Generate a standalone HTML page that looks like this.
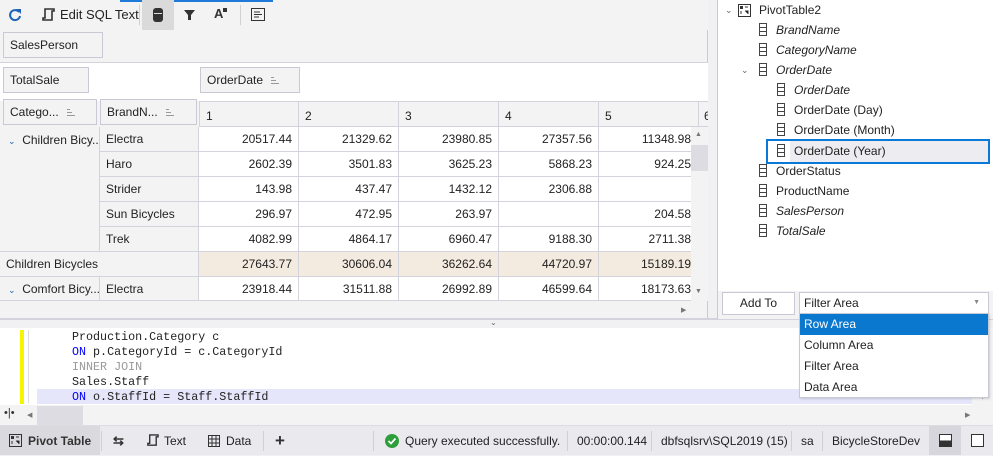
<!DOCTYPE html>
<html><head><style>
*{box-sizing:border-box;margin:0;padding:0}
body{width:993px;height:455px;overflow:hidden;background:#f1f1f3;font-family:"Liberation Sans",sans-serif;font-size:12px;color:#222;position:relative}
.a{position:absolute}
.box{position:absolute;border:1px solid #c9c9d6;background:#f3f3f3;padding:0 0 0 6px;line-height:22px;color:#222;white-space:nowrap}
.sort{display:inline-block;width:8px;height:7px;margin-left:8px;vertical-align:middle;background:linear-gradient(#999,#999) 0 0/3px 1px no-repeat,linear-gradient(#999,#999) 0 3px/5px 1px no-repeat,linear-gradient(#999,#999) 0 6px/8px 1px no-repeat}
.c{position:absolute;border-right:1px solid #d3d3de;border-bottom:1px solid #d3d3de;height:25px;line-height:24px;padding:0 6px;text-align:right;background:#fff;white-space:nowrap;overflow:hidden}
.rh{background:#f3f3f3;text-align:left}
.tot{background:#f4ebe0}
.tr{position:absolute;left:0;height:20px;line-height:20px;white-space:nowrap}
.fi{display:inline-block;width:8px;height:13px;border:1px solid #444;vertical-align:-2px;margin-right:9px;background:linear-gradient(#444,#444) 0 3px/100% 1px no-repeat,linear-gradient(#444,#444) 0 7px/100% 1px no-repeat}
.mono{font-family:"Liberation Mono",monospace;font-size:11.7px}
.kw{color:#0000ff}
.sb span{position:absolute;top:0;line-height:30px;white-space:nowrap}
.sep{position:absolute;top:5px;width:1px;height:20px;background:#cfcfd8}
</style></head><body>
<div class="a" style="left:0;top:0;width:708px;height:30px;background:#f3f3f3"></div>
<div class="a" style="left:120px;top:0;width:153px;height:2px;background:#1e7ad8"></div>
<svg class="a" style="left:8px;top:8px" width="14" height="14" viewBox="0 0 14 14"><path d="M11 4A5 5 0 1 0 12 8" fill="none" stroke="#1d63b8" stroke-width="2"/><path d="M8 1l5 0 0 5z" fill="#1d63b8"/></svg>
<svg class="a" style="left:41px;top:8px" width="14" height="14" viewBox="0 0 14 14"><path d="M4 1h9v2h-2v9H2v-2h2z" fill="none" stroke="#333" stroke-width="1.6"/></svg>
<div class="a" style="left:60px;top:7px;font-size:13px">Edit SQL Text</div>
<div class="a" style="left:139px;top:5px;width:1px;height:20px;background:#d0d0d0"></div>
<div class="a" style="left:142px;top:0;width:32px;height:30px;background:#dadada"></div>
<svg class="a" style="left:153px;top:8px" width="10" height="14" viewBox="0 0 10 14"><rect x="0" y="0" width="10" height="14" rx="3" fill="#333"/><rect x="1" y="5" width="8" height="1" fill="#ddd"/></svg>
<svg class="a" style="left:184px;top:10px" width="11" height="10"><path d="M0 0h11L7 5v5H4V5z" fill="#333"/></svg>
<div class="a" style="left:214px;top:6px;font-size:13px;font-weight:bold;color:#333">A</div><div class="a" style="left:223px;top:8px;width:4px;height:4px;background:#333"></div>
<div class="a" style="left:240px;top:5px;width:1px;height:20px;background:#d0d0d0"></div>
<svg class="a" style="left:251px;top:8px" width="14" height="13"><rect x="0.5" y="0.5" width="13" height="12" fill="none" stroke="#333"/><path d="M3 4h6M3 6.5h8M3 9h5" stroke="#333"/></svg>
<div class="a" style="left:0;top:30px;width:708px;height:290px;background:#f3f3f3;border-right:1px solid #c9c9d6"></div>
<div class="a" style="left:0;top:62px;width:708px;height:1px;background:#d3d3de"></div>
<div class="box" style="left:3px;top:32px;width:100px;height:26px;line-height:24px">SalesPerson</div>
<div class="a" style="left:0;top:63px;width:708px;height:38px;background:#fff"></div>
<div class="box" style="left:3px;top:67px;width:86px;height:26px;line-height:24px">TotalSale</div>
<div class="box" style="left:200px;top:67px;width:100px;height:26px;line-height:24px">OrderDate<span class="sort"></span></div>
<div class="box" style="left:3px;top:99px;width:94px;height:26px;line-height:24px">Catego...<span class="sort"></span></div>
<div class="box" style="left:100px;top:99px;width:97px;height:26px;line-height:24px">BrandN...<span class="sort"></span></div>
<div class="c rh" style="left:199px;top:101px;width:100px;height:26px;line-height:28px;border-top:1px solid #d3d3de;border-left:1px solid #d3d3de">1</div>
<div class="c rh" style="left:299px;top:101px;width:100px;height:26px;line-height:28px;border-top:1px solid #d3d3de">2</div>
<div class="c rh" style="left:399px;top:101px;width:100px;height:26px;line-height:28px;border-top:1px solid #d3d3de">3</div>
<div class="c rh" style="left:499px;top:101px;width:100px;height:26px;line-height:28px;border-top:1px solid #d3d3de">4</div>
<div class="c rh" style="left:599px;top:101px;width:100px;height:26px;line-height:28px;border-top:1px solid #d3d3de">5</div>
<div class="c rh" style="left:699px;top:101px;width:9px;height:26px;line-height:28px;border-top:1px solid #d3d3de;padding:0 0 0 5px;border-right:0">6</div>
<div class="c rh" style="left:0;top:127px;width:100px;height:125px;line-height:26px;padding-left:8px"><span style="color:#1d63b8;font-size:9px">&#8964;</span>&nbsp; Children Bicy...</div>
<div class="c rh" style="left:100px;top:127px;width:99px">Electra</div>
<div class="c rh" style="left:100px;top:152px;width:99px">Haro</div>
<div class="c rh" style="left:100px;top:177px;width:99px">Strider</div>
<div class="c rh" style="left:100px;top:202px;width:99px">Sun Bicycles</div>
<div class="c rh" style="left:100px;top:227px;width:99px">Trek</div>
<div class="c rh" style="left:0;top:252px;width:199px">Children Bicycles</div>
<div class="c rh" style="left:0;top:277px;width:100px;padding-left:8px;height:24px"><span style="color:#1d63b8;font-size:9px">&#8964;</span>&nbsp; Comfort Bicy...</div>
<div class="c rh" style="left:100px;top:277px;width:99px;height:24px">Electra</div>
<div class="c" style="left:199px;top:127px;width:100px">20517.44</div><div class="c" style="left:299px;top:127px;width:100px">21329.62</div><div class="c" style="left:399px;top:127px;width:100px">23980.85</div><div class="c" style="left:499px;top:127px;width:100px">27357.56</div><div class="c" style="left:599px;top:127px;width:92px;padding-right:0;border-right:0">11348.98</div>
<div class="c" style="left:199px;top:152px;width:100px">2602.39</div><div class="c" style="left:299px;top:152px;width:100px">3501.83</div><div class="c" style="left:399px;top:152px;width:100px">3625.23</div><div class="c" style="left:499px;top:152px;width:100px">5868.23</div><div class="c" style="left:599px;top:152px;width:92px;padding-right:0;border-right:0">924.25</div>
<div class="c" style="left:199px;top:177px;width:100px">143.98</div><div class="c" style="left:299px;top:177px;width:100px">437.47</div><div class="c" style="left:399px;top:177px;width:100px">1432.12</div><div class="c" style="left:499px;top:177px;width:100px">2306.88</div><div class="c" style="left:599px;top:177px;width:92px;padding-right:0;border-right:0"></div>
<div class="c" style="left:199px;top:202px;width:100px">296.97</div><div class="c" style="left:299px;top:202px;width:100px">472.95</div><div class="c" style="left:399px;top:202px;width:100px">263.97</div><div class="c" style="left:499px;top:202px;width:100px"></div><div class="c" style="left:599px;top:202px;width:92px;padding-right:0;border-right:0">204.58</div>
<div class="c" style="left:199px;top:227px;width:100px">4082.99</div><div class="c" style="left:299px;top:227px;width:100px">4864.17</div><div class="c" style="left:399px;top:227px;width:100px">6960.47</div><div class="c" style="left:499px;top:227px;width:100px">9188.30</div><div class="c" style="left:599px;top:227px;width:92px;padding-right:0;border-right:0">2711.38</div>
<div class="c tot" style="left:199px;top:252px;width:100px">27643.77</div><div class="c tot" style="left:299px;top:252px;width:100px">30606.04</div><div class="c tot" style="left:399px;top:252px;width:100px">36262.64</div><div class="c tot" style="left:499px;top:252px;width:100px">44720.97</div><div class="c tot" style="left:599px;top:252px;width:92px;padding-right:0;border-right:0">15189.19</div>
<div class="c" style="left:199px;top:277px;width:100px;height:24px">23918.44</div><div class="c" style="left:299px;top:277px;width:100px;height:24px">31511.88</div><div class="c" style="left:399px;top:277px;width:100px;height:24px">26992.89</div><div class="c" style="left:499px;top:277px;width:100px;height:24px">46599.64</div><div class="c" style="left:599px;top:277px;width:92px;height:24px;padding-right:0;border-right:0">18173.63</div>
<div class="a" style="left:691px;top:127px;width:17px;height:174px;background:#f3f3f3"></div>
<div class="a" style="left:691px;top:145px;width:17px;height:26px;background:#dcdce2"></div>
<div class="a" style="left:695px;top:131px;font-size:7px;color:#777">&#9650;</div>
<div class="a" style="left:695px;top:288px;font-size:7px;color:#777">&#9660;</div>
<div class="a" style="left:681px;top:306px;font-size:7px;color:#777">&#9654;</div>
<div class="a" style="left:0;top:318px;width:993px;height:2px;background:#d3d3de"></div>
<div class="a" style="left:717px;top:0;width:276px;height:291px;background:#fff;border-left:1px solid #c9c9d6"></div>
<div class="a" style="left:717px;top:291px;width:276px;height:28px;border-left:1px solid #c9c9d6;background:#f3f3f3"></div>
<div class="tr" style="left:725px;top:0;font-size:9px;color:#666">&#8964;</div>
<svg class="a" style="left:738px;top:4px" width="13" height="13"><rect x="0.5" y="0.5" width="12" height="12" fill="none" stroke="#333"/><rect x="2" y="2" width="3" height="3" fill="#333"/><path d="M7 3h3M3 7v3M7 7h3v3" stroke="#333"/></svg>
<div class="tr" style="left:759px;top:0">PivotTable2</div>
<div class="tr" style="left:759px;top:20px;font-style:italic"><span class="fi"></span>BrandName</div>
<div class="tr" style="left:759px;top:40px;font-style:italic"><span class="fi"></span>CategoryName</div>
<div class="tr" style="left:741px;top:60px;font-size:9px;color:#666">&#8964;</div>
<div class="tr" style="left:759px;top:60px;font-style:italic"><span class="fi"></span>OrderDate</div>
<div class="tr" style="left:777px;top:80px;font-style:italic"><span class="fi"></span>OrderDate</div>
<div class="tr" style="left:777px;top:100px"><span class="fi"></span>OrderDate (Day)</div>
<div class="tr" style="left:777px;top:120px"><span class="fi"></span>OrderDate (Month)</div>
<div class="a" style="left:766px;top:139px;width:224px;height:25px;border:2px solid #0a78d7"></div>
<div class="a" style="left:790px;top:141px;width:198px;height:21px;background:#ececf1"></div>
<div class="tr" style="left:777px;top:141px"><span class="fi"></span>OrderDate (Year)</div>
<div class="tr" style="left:759px;top:161px"><span class="fi"></span>OrderStatus</div>
<div class="tr" style="left:759px;top:181px"><span class="fi"></span>ProductName</div>
<div class="tr" style="left:759px;top:201px;font-style:italic"><span class="fi"></span>SalesPerson</div>
<div class="tr" style="left:759px;top:221px;font-style:italic"><span class="fi"></span>TotalSale</div>
<div class="a" style="left:722px;top:292px;width:73px;height:23px;border:1px solid #c9c9d6;background:#fff;text-align:center;line-height:21px">Add To</div>
<div class="a" style="left:799px;top:292px;width:190px;height:22px;border:1px solid #c9c9d6;background:#fff;line-height:20px;padding-left:4px">Filter Area<span style="position:absolute;right:8px;top:0;font-size:7px;color:#888">&#9660;</span></div>
<div class="a" style="left:0;top:328px;width:993px;height:77px;background:#fff"></div>
<div class="a" style="left:0;top:320px;width:993px;height:8px;background:#f1f1f3"></div>
<div class="a" style="left:490px;top:318px;font-size:8px;color:#666">&#8964;</div>
<div class="a" style="left:20px;top:330px;width:4px;height:74px;background:#f5f500"></div>
<div class="a" style="left:28px;top:330px;width:1px;height:73px;background:#ddd"></div>
<div class="a" style="left:37px;top:389px;width:935px;height:15px;background:#e6e6fa"></div>
<div class="a mono" style="left:72px;top:330px;line-height:15px;white-space:pre">Production.Category c
<span class="kw">ON</span> p.CategoryId = c.CategoryId
<span style="color:#999">INNER JOIN</span>
Sales.Staff
<span class="kw">ON</span> o.StaffId = Staff.StaffId</div>
<div class="a" style="left:972px;top:328px;width:21px;height:77px;background:#f3f3f3"></div>
<div class="a" style="left:979px;top:394px;font-size:7px;color:#777">&#9660;</div>
<div class="a" style="left:0;top:405px;width:993px;height:20px;background:#f3f3f3"></div>
<div class="a" style="left:37px;top:406px;width:46px;height:19px;background:#dcdce2"></div>
<div class="a" style="left:4px;top:407px;font-size:11px;color:#333">&#8226;|&#8226;</div>
<div class="a" style="left:27px;top:411px;font-size:7px;color:#777">&#9664;</div>
<div class="a" style="left:965px;top:411px;font-size:7px;color:#777">&#9654;</div>
<div class="a" style="left:799px;top:313px;width:190px;height:85px;background:#fff;border:1px solid #c9c9d6;box-shadow:1px 1px 2px rgba(0,0,0,.15)"></div>
<div class="a" style="left:800px;top:314px;width:188px;height:21px;background:#0a78cf;color:#fff;line-height:21px;padding-left:4px">Row Area</div>
<div class="a" style="left:804px;top:335px;line-height:21px">Column Area</div>
<div class="a" style="left:804px;top:356px;line-height:21px">Filter Area</div>
<div class="a" style="left:804px;top:377px;line-height:21px">Data Area</div>
<div class="a sb" style="left:0;top:425px;width:993px;height:30px;background:#e9e9ee;border-top:1px solid #dcdce2">
<div class="a" style="left:0;top:0;width:100px;height:29px;background:#dadade"></div>
<svg class="a" style="left:9px;top:8px" width="13" height="13"><rect x="0.5" y="0.5" width="12" height="12" fill="none" stroke="#333"/><rect x="2" y="2" width="3" height="3" fill="#333"/><path d="M7 3h3M3 7v3M7 7h3v3" stroke="#333"/></svg>
<span style="left:28px;font-weight:bold;color:#333">Pivot Table</span>
<div class="sep" style="left:101px"></div>
<span style="left:113px;font-size:13px;font-weight:bold;color:#333">&#8646;</span>
<svg class="a" style="left:146px;top:8px" width="13" height="13" viewBox="0 0 14 14"><path d="M4 1h9v2h-2v9H2v-2h2z" fill="none" stroke="#333" stroke-width="1.5"/></svg>
<span style="left:164px">Text</span>
<svg class="a" style="left:208px;top:9px" width="12" height="12"><rect x="0.5" y="0.5" width="11" height="11" fill="none" stroke="#333"/><path d="M4 0v12M8 0v12M0 4h12M0 8h12" stroke="#333"/></svg>
<span style="left:226px">Data</span>
<div class="sep" style="left:263px"></div>
<span style="left:275px;font-size:17px;font-weight:bold;color:#333">+</span>
<div class="sep" style="left:373px"></div>
<svg class="a" style="left:385px;top:8px" width="14" height="14"><circle cx="7" cy="7" r="7" fill="#2e9e3b"/><path d="M3.5 7l2.5 2.5 4.5-5" stroke="#fff" stroke-width="1.8" fill="none"/></svg>
<span style="left:405px">Query executed successfully.</span>
<div class="sep" style="left:567px"></div>
<span style="left:577px">00:00:00.144</span>
<div class="sep" style="left:651px"></div>
<span style="left:661px">dbfsqlsrv\SQL2019 (15)</span>
<div class="sep" style="left:791px"></div>
<span style="left:801px">sa</span>
<div class="sep" style="left:822px"></div>
<span style="left:832px">BicycleStoreDev</span>
<div class="a" style="left:929px;top:0;width:32px;height:29px;background:#d6d6dc"></div>
<div class="a" style="left:939px;top:8px;width:13px;height:13px;border:1px solid #333;background:linear-gradient(#fff 50%,#333 50%)"></div>
<div class="a" style="left:971px;top:8px;width:13px;height:13px;border:1px solid #333;background:#fff"></div>
</div>
</body></html>
